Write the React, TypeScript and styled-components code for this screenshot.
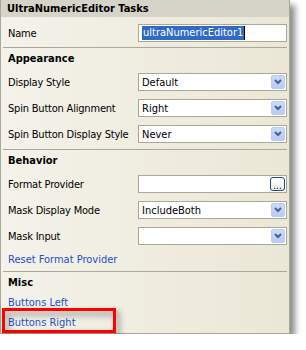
import React from 'react'
import styled, { createGlobalStyle } from 'styled-components'

const GlobalStyle = createGlobalStyle`
  html, body {
    margin: 0;
    padding: 0;
    background: #ffffff;
  }
  body {
    font-family: "DejaVu Sans Condensed", "Liberation Sans", sans-serif;
    font-size: 11px;
    color: #000;
  }
`;

const Panel = styled.div`
  width: 290px;
  box-sizing: border-box;
  border: 1px solid #a9a799;
  border-top: none;
  background: linear-gradient(to right, #f4f2ea, #ebe7d6);
  box-shadow: 5px 5px 6px rgba(0, 0, 0, 0.45);
`;

const TitleBar = styled.div`
  height: 17px;
  line-height: 17px;
  padding-left: 6px;
  background: #d6d3c8;
  font-weight: bold;
  font-size: 11px;
`;

const Section = styled.div<{ pt?: number; pb?: number }>`
  padding-top: ${(p) => p.pt ?? 0}px;
  padding-bottom: ${(p) => p.pb ?? 0}px;
`;

const Separator = styled.div`
  height: 1px;
  margin: 0 2px 0 2px;
  background: #aca899;
`;

const Header = styled.div`
  height: 21px;
  line-height: 21px;
  padding-left: 7px;
  font-weight: bold;
`;

const Row = styled.div`
  height: 26px;
  display: flex;
  align-items: center;
  padding-left: 7px;
`;

const Label = styled.div`
  width: 130px;
  white-space: nowrap;
  letter-spacing: -0.2px;
`;

const Field = styled.div`
  position: relative;
  width: 149px;
  height: 18px;
  box-sizing: border-box;
  border: 1px solid #aaa798;
  background: #fff;
  display: flex;
  align-items: center;
  padding-left: 3px;
`;

const Selected = styled.span`
  background: #316ac5;
  color: #fff;
  padding: 0 1px;
  line-height: 14px;
  border-right: 1px solid #000;
`;

const DropButton = styled.div`
  position: absolute;
  right: 1px;
  top: 1px;
  width: 14px;
  height: 14px;
  box-sizing: border-box;
  border: 1px solid #bccbef;
  border-radius: 2px;
  background: linear-gradient(to bottom, #cddafc, #b6cbf5);
  display: flex;
  align-items: center;
  justify-content: center;
`;

const EllipsisButton = styled.div`
  position: absolute;
  right: 1px;
  top: 1px;
  width: 15px;
  height: 14px;
  box-sizing: border-box;
  border: 1px solid #284c74;
  border-radius: 3px;
  background: linear-gradient(to bottom, #ffffff, #ecebe4);
  font-size: 10px;
  line-height: 16px;
  text-align: center;
  letter-spacing: 0;
  overflow: hidden;
`;

const LinkRow = styled.div<{ h: number }>`
  position: relative;
  height: ${(p) => p.h}px;
  line-height: ${(p) => p.h}px;
  padding-left: 7px;
  color: #2150c8;
`;

const Highlight = styled.div`
  position: absolute;
  left: 1px;
  top: -5px;
  width: 114px;
  height: 25px;
  box-sizing: border-box;
  border: 3px solid #ff0000;
  filter: drop-shadow(3px 4px 3px rgba(0, 0, 0, 0.45));
  pointer-events: none;
`;

function Chevron() {
  return (
    <svg width="8" height="6" viewBox="0 0 8 6">
      <polyline points="1,1 4,4 7,1" fill="none" stroke="#4d6185" strokeWidth="2" />
    </svg>
  )
}

function Combo({ value }: { value: string }) {
  return (
    <Field>
      {value}
      <DropButton>
        <Chevron />
      </DropButton>
    </Field>
  )
}

export default function App() {
  return (
    <>
      <GlobalStyle />
      <Panel>
        <TitleBar>UltraNumericEditor Tasks</TitleBar>
        <Section pt={3} pb={1}>
          <Row>
            <Label>Name</Label>
            <Field>
              <Selected>ultraNumericEditor1</Selected>
            </Field>
          </Row>
        </Section>
        <Separator />
        <Section pb={2}>
          <Header>Appearance</Header>
          <Row>
            <Label>Display Style</Label>
            <Combo value="Default" />
          </Row>
          <Row>
            <Label>Spin Button Alignment</Label>
            <Combo value="Right" />
          </Row>
          <Row>
            <Label>Spin Button Display Style</Label>
            <Combo value="Never" />
          </Row>
        </Section>
        <Separator />
        <Section>
          <Header>Behavior</Header>
          <Row>
            <Label>Format Provider</Label>
            <Field>
              <EllipsisButton>...</EllipsisButton>
            </Field>
          </Row>
          <Row>
            <Label>Mask Display Mode</Label>
            <Combo value="IncludeBoth" />
          </Row>
          <Row>
            <Label>Mask Input</Label>
            <Combo value="" />
          </Row>
          <LinkRow h={22}>Reset Format Provider</LinkRow>
        </Section>
        <Separator />
        <Section>
          <Header>Misc</Header>
          <LinkRow h={20}>Buttons Left</LinkRow>
          <LinkRow h={20}>
            Buttons Right
            <Highlight />
          </LinkRow>
        </Section>
      </Panel>
    </>
  )
}
